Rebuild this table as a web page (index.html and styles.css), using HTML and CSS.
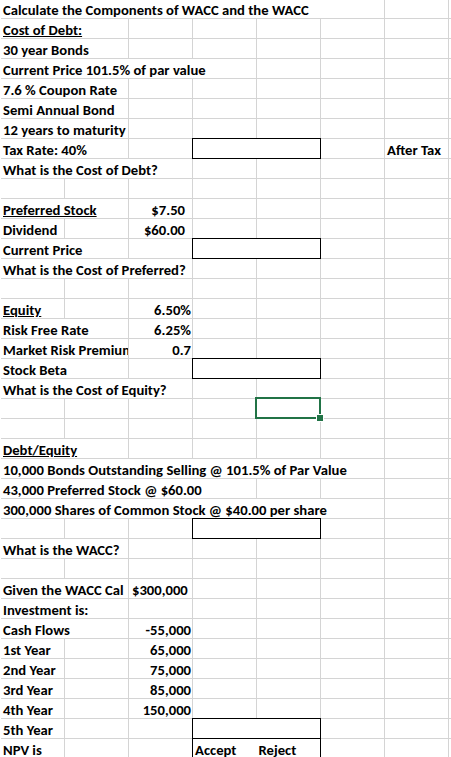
FILE: index.html
```html
<!DOCTYPE html>
<html lang="en">
<head>
<meta charset="utf-8">
<title>WACC</title>
<link rel="stylesheet" href="styles.css">
</head>
<body>
<div class="sheet">
  <div class="row first"><div class="c s6">Calculate the Components of WACC and the WACC</div><div class="c"></div><div class="c"></div></div>
  <div class="row"><div class="c s2"><span class="u">Cost of Debt:</span></div><div class="c"></div><div class="c"></div><div class="c"></div><div class="c"></div><div class="c"></div><div class="c"></div></div>
  <div class="row"><div class="c s2">30 year Bonds</div><div class="c"></div><div class="c"></div><div class="c"></div><div class="c"></div><div class="c"></div><div class="c"></div></div>
  <div class="row"><div class="c s4">Current Price 101.5% of par value</div><div class="c"></div><div class="c"></div><div class="c"></div><div class="c"></div></div>
  <div class="row"><div class="c s2">7.6 % Coupon Rate</div><div class="c"></div><div class="c"></div><div class="c"></div><div class="c"></div><div class="c"></div><div class="c"></div></div>
  <div class="row"><div class="c s2">Semi Annual Bond</div><div class="c"></div><div class="c"></div><div class="c"></div><div class="c"></div><div class="c"></div><div class="c"></div></div>
  <div class="row"><div class="c s2">12 years to maturity</div><div class="c"></div><div class="c"></div><div class="c"></div><div class="c"></div><div class="c"></div><div class="c"></div></div>
  <div class="row"><div class="c s2">Tax Rate: 40%</div><div class="c"></div><div class="c s2 box"></div><div class="c"></div><div class="c">After Tax</div><div class="c"></div></div>
  <div class="row"><div class="c s3">What is the Cost of Debt?</div><div class="c"></div><div class="c"></div><div class="c"></div><div class="c"></div><div class="c"></div></div>
  <div class="row"><div class="c"></div><div class="c"></div><div class="c"></div><div class="c"></div><div class="c"></div><div class="c"></div><div class="c"></div><div class="c"></div></div>
  <div class="row"><div class="c s2"><span class="u">Preferred Stock</span></div><div class="c r cur">$7.50</div><div class="c"></div><div class="c"></div><div class="c"></div><div class="c"></div><div class="c"></div></div>
  <div class="row"><div class="c">Dividend</div><div class="c"></div><div class="c r cur">$60.00</div><div class="c"></div><div class="c"></div><div class="c"></div><div class="c"></div><div class="c"></div></div>
  <div class="row"><div class="c s2">Current Price</div><div class="c"></div><div class="c s2 box"></div><div class="c"></div><div class="c"></div><div class="c"></div></div>
  <div class="row"><div class="c s3">What is the Cost of Preferred?</div><div class="c"></div><div class="c"></div><div class="c"></div><div class="c"></div><div class="c"></div></div>
  <div class="row"><div class="c"></div><div class="c"></div><div class="c"></div><div class="c"></div><div class="c"></div><div class="c"></div><div class="c"></div><div class="c"></div></div>
  <div class="row"><div class="c"><span class="u">Equity</span></div><div class="c"></div><div class="c r">6.50%</div><div class="c"></div><div class="c"></div><div class="c"></div><div class="c"></div><div class="c"></div></div>
  <div class="row"><div class="c s2">Risk Free Rate</div><div class="c r">6.25%</div><div class="c"></div><div class="c"></div><div class="c"></div><div class="c"></div><div class="c"></div></div>
  <div class="row"><div class="c s2">Market Risk Premium</div><div class="c r">0.7</div><div class="c"></div><div class="c"></div><div class="c"></div><div class="c"></div><div class="c"></div></div>
  <div class="row"><div class="c s2">Stock Beta</div><div class="c"></div><div class="c s2 box"></div><div class="c"></div><div class="c"></div><div class="c"></div></div>
  <div class="row"><div class="c s3">What is the Cost of Equity?</div><div class="c"></div><div class="c"></div><div class="c"></div><div class="c"></div><div class="c"></div></div>
  <div class="row"><div class="c"></div><div class="c"></div><div class="c"></div><div class="c"></div><div class="c sel"><span class="handle"></span></div><div class="c"></div><div class="c"></div><div class="c"></div></div>
  <div class="row"><div class="c"></div><div class="c"></div><div class="c"></div><div class="c"></div><div class="c"></div><div class="c"></div><div class="c"></div><div class="c"></div></div>
  <div class="row"><div class="c s2"><span class="u">Debt/Equity</span></div><div class="c"></div><div class="c"></div><div class="c"></div><div class="c"></div><div class="c"></div><div class="c"></div></div>
  <div class="row"><div class="c s6">10,000 Bonds Outstanding Selling @ 101.5% of Par Value</div><div class="c"></div><div class="c"></div></div>
  <div class="row"><div class="c s4">43,000 Preferred Stock @ $60.00</div><div class="c"></div><div class="c"></div><div class="c"></div><div class="c"></div></div>
  <div class="row"><div class="c s6">300,000 Shares of Common Stock @ $40.00 per share</div><div class="c"></div><div class="c"></div></div>
  <div class="row"><div class="c"></div><div class="c"></div><div class="c"></div><div class="c s2 box"></div><div class="c"></div><div class="c"></div><div class="c"></div></div>
  <div class="row"><div class="c s2">What is the WACC?</div><div class="c"></div><div class="c"></div><div class="c"></div><div class="c"></div><div class="c"></div><div class="c"></div></div>
  <div class="row"><div class="c"></div><div class="c"></div><div class="c"></div><div class="c"></div><div class="c"></div><div class="c"></div><div class="c"></div><div class="c"></div></div>
  <div class="row"><div class="c s2">Given the WACC Cal</div><div class="c lead">$300,000</div><div class="c"></div><div class="c"></div><div class="c"></div><div class="c"></div><div class="c"></div></div>
  <div class="row"><div class="c s2">Investment is:</div><div class="c"></div><div class="c"></div><div class="c"></div><div class="c"></div><div class="c"></div><div class="c"></div></div>
  <div class="row"><div class="c s2">Cash Flows</div><div class="c r">-55,000</div><div class="c"></div><div class="c"></div><div class="c"></div><div class="c"></div><div class="c"></div></div>
  <div class="row"><div class="c">1st Year</div><div class="c"></div><div class="c r">65,000</div><div class="c"></div><div class="c"></div><div class="c"></div><div class="c"></div><div class="c"></div></div>
  <div class="row"><div class="c">2nd Year</div><div class="c"></div><div class="c r">75,000</div><div class="c"></div><div class="c"></div><div class="c"></div><div class="c"></div><div class="c"></div></div>
  <div class="row"><div class="c">3rd Year</div><div class="c"></div><div class="c r">85,000</div><div class="c"></div><div class="c"></div><div class="c"></div><div class="c"></div><div class="c"></div></div>
  <div class="row"><div class="c">4th Year</div><div class="c"></div><div class="c r">150,000</div><div class="c"></div><div class="c"></div><div class="c"></div><div class="c"></div><div class="c"></div></div>
  <div class="row"><div class="c">5th Year</div><div class="c"></div><div class="c"></div><div class="c s2 box"></div><div class="c"></div><div class="c"></div><div class="c"></div></div>
  <div class="row"><div class="c">NPV is</div><div class="c"></div><div class="c"></div><div class="c s2 box-open"><span class="half">Accept</span><span class="half">Reject</span></div><div class="c"></div><div class="c"></div><div class="c"></div></div>
</div>
</body>
</html>
```

FILE: styles.css
```css
* { box-sizing: border-box; }
html, body { margin: 0; padding: 0; background: #ffffff; }
body { width: 451px; height: 757px; overflow: hidden; }

.sheet {
  padding-left: 1px;
  font-family: Carlito, Calibri, Lato, "Liberation Sans", sans-serif;
  font-weight: 700;
  font-size: 14.67px;
  color: #000000;
}

.row {
  display: grid;
  grid-template-columns: repeat(8, 64px);
  height: 20px;
}
.row.first { height: 19px; }

.c {
  border-right: 1px solid #d4d4d4;
  border-bottom: 1px solid #d4d4d4;
  padding: 0 2px;
  line-height: 22px;
  white-space: nowrap;
  overflow: hidden;
}
.first .c { line-height: 20px; }

.s2 { grid-column: span 2; }
.s3 { grid-column: span 3; }
.s4 { grid-column: span 4; }
.s5 { grid-column: span 5; }
.s6 { grid-column: span 6; }

.r { text-align: right; padding-right: 1px; }
.cur { padding-right: 7px; }
.lead { padding-left: 3px; }
.u { text-decoration: underline; }

.box {
  border-right-color: #000000;
  border-bottom-color: #000000;
  box-shadow: -1px 0 0 #000000, 0 -1px 0 #000000, -1px -1px 0 #000000;
}
.box-open {
  display: flex;
  padding: 0;
  border-right-color: #000000;
  box-shadow: -1px 0 0 #000000;
}
.half { width: 64px; padding-left: 2px; }

.sel { position: relative; overflow: visible; }
.sel::before {
  content: "";
  position: absolute;
  left: -2px;
  top: -2px;
  right: -1px;
  bottom: -1px;
  border: 2px solid #217346;
  z-index: 5;
}
.handle {
  position: absolute;
  left: 59px;
  top: 15px;
  width: 8px;
  height: 8px;
  background: #217346;
  border: 1px solid #ffffff;
  z-index: 6;
}
```
